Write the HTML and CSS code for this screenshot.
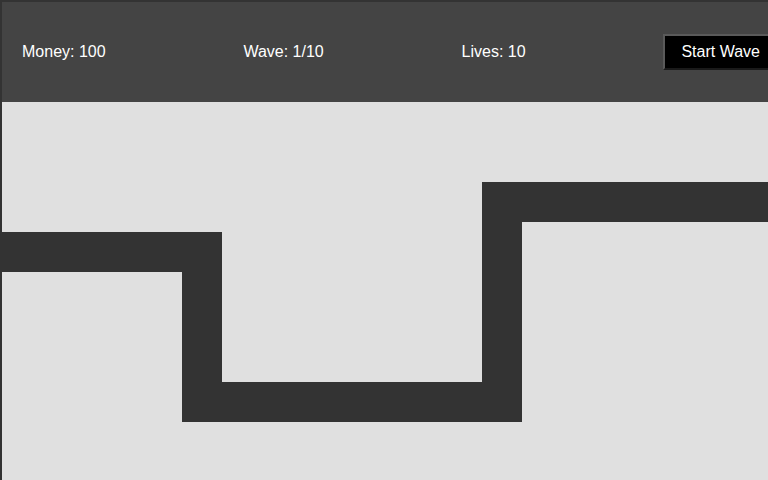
FILE: index.html
```html
<!DOCTYPE html>
<html>
<head>
<meta charset="utf-8">
<link rel="stylesheet" href="styles.css">
</head>
<body>
<div class="game">
  <div class="topbar">
    <div class="stat">Money: 100</div>
    <div class="stat">Wave: 1/10</div>
    <div class="stat">Lives: 10</div>
    <button class="start">Start Wave</button>
  </div>
  <div class="field">
    <svg class="map" width="800" height="600" viewBox="0 0 800 600">
      <polyline points="-20,150 200,150 200,300 500,300 500,100 820,100" fill="none" stroke="#333333" stroke-width="40" stroke-linejoin="miter" stroke-linecap="butt"/>
    </svg>
  </div>
</div>
</body>
</html>
```

FILE: styles.css
```css
html, body {
  margin: 0;
  padding: 0;
  overflow: hidden;
  background: #ffffff;
}
.game {
  width: 800px;
  border: 2px solid #333333;
  font-family: "Liberation Sans", Arial, sans-serif;
}
.topbar {
  height: 100px;
  background: #444444;
  display: flex;
  align-items: center;
  justify-content: space-between;
  padding: 0 20px;
  color: #ffffff;
  font-size: 16px;
}
.start {
  font-family: "Liberation Sans", Arial, sans-serif;
  font-size: 16px;
  line-height: 18px;
  color: #ffffff;
  background: #000000;
  padding: 7px 20px 7px 16px;
  border: 2px solid;
  border-color: #5a5a5a #1a1a1a #1a1a1a #5a5a5a;
  margin: 0;
}
.field {
  background: #e0e0e0;
  height: 600px;
}
.map {
  display: block;
}
```
